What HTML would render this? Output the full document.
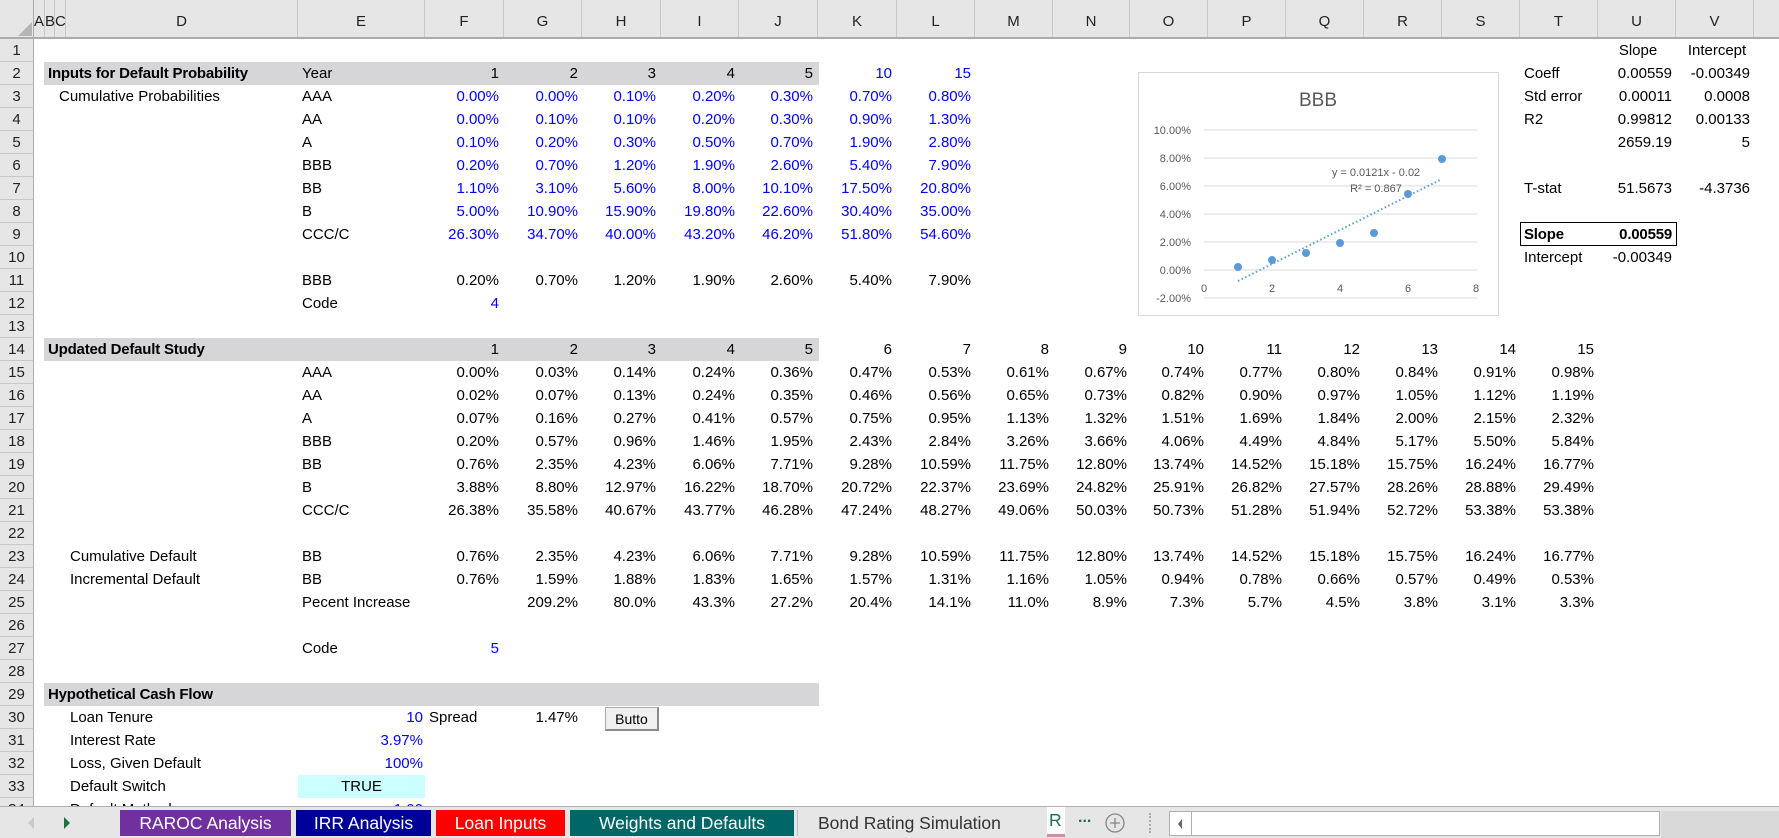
<!DOCTYPE html>
<html><head><meta charset="utf-8"><style>
*{margin:0;padding:0;box-sizing:border-box}
body{width:1779px;height:838px;overflow:hidden;background:#fff;font-family:"Liberation Sans",Arial,sans-serif;font-size:15px;color:#000;position:relative}
.hdr{position:absolute;top:0;left:0;width:1779px;height:39px;background:#e6e6e6;border-bottom:2px solid #ababab}
.ch{position:absolute;top:0;height:37px;line-height:44px;text-align:center;color:#222;font-size:15px;border-right:1px solid #c8c8c8}
.rh{position:absolute;left:0;width:34px;height:23px;line-height:23px;background:#e6e6e6;border-bottom:1px solid #c8c8c8;border-right:1px solid #ababab;text-align:center;color:#222;font-size:15px}
.r{position:absolute;left:0;width:1779px;height:23px;line-height:23px;white-space:nowrap}
.c{position:absolute;top:0;width:79px;text-align:right;padding-right:5px}
.l{position:absolute;top:0}
.b{color:#0000ff}
.band{position:absolute;left:44px;width:775px;height:23px;background:#d6d6d8}
.F{left:425px}.G{left:504px}.H{left:582px}.I{left:661px}.J{left:739px}.K{left:818px}.L{left:897px}.M{left:975px}.N{left:1053px}.O{left:1130px}.P{left:1208px}.Q{left:1286px}.R{left:1364px}.S{left:1442px}.T{left:1520px}.U{left:1598px}.V{left:1676px}
.bold{font-weight:bold;letter-spacing:-0.2px}
.tabbar{position:absolute;left:0;top:806px;width:1779px;height:32px;background:#e6e6e6;border-top:1px solid #b0b0b0}
.tab{position:absolute;top:3px;height:26px;line-height:26px;color:#fff;font-size:17.5px;text-align:center}
</style></head><body>

<div class="hdr">
<svg style="position:absolute;left:18px;top:22px" width="14" height="14"><polygon points="14,0 14,14 0,14" fill="#b5b5b5"/></svg>
<div class="ch" style="left:0;width:34px;border-right:1px solid #ababab"></div>
<div class="ch" style="left:34px;width:11px">A</div>
<div class="ch" style="left:45px;width:10px">B</div>
<div class="ch" style="left:55px;width:11px">C</div>
<div class="ch" style="left:66px;width:232px">D</div>
<div class="ch" style="left:298px;width:127px">E</div>
<div class="ch" style="left:425px;width:79px">F</div>
<div class="ch" style="left:504px;width:78px">G</div>
<div class="ch" style="left:582px;width:79px">H</div>
<div class="ch" style="left:661px;width:78px">I</div>
<div class="ch" style="left:739px;width:79px">J</div>
<div class="ch" style="left:818px;width:79px">K</div>
<div class="ch" style="left:897px;width:78px">L</div>
<div class="ch" style="left:975px;width:78px">M</div>
<div class="ch" style="left:1053px;width:77px">N</div>
<div class="ch" style="left:1130px;width:78px">O</div>
<div class="ch" style="left:1208px;width:78px">P</div>
<div class="ch" style="left:1286px;width:78px">Q</div>
<div class="ch" style="left:1364px;width:78px">R</div>
<div class="ch" style="left:1442px;width:78px">S</div>
<div class="ch" style="left:1520px;width:78px">T</div>
<div class="ch" style="left:1598px;width:78px">U</div>
<div class="ch" style="left:1676px;width:78px">V</div>
</div>

<div class="rh" style="top:39px">1</div><div class="rh" style="top:62px">2</div><div class="rh" style="top:85px">3</div><div class="rh" style="top:108px">4</div><div class="rh" style="top:131px">5</div><div class="rh" style="top:154px">6</div><div class="rh" style="top:177px">7</div><div class="rh" style="top:200px">8</div><div class="rh" style="top:223px">9</div><div class="rh" style="top:246px">10</div><div class="rh" style="top:269px">11</div><div class="rh" style="top:292px">12</div><div class="rh" style="top:315px">13</div><div class="rh" style="top:338px">14</div><div class="rh" style="top:361px">15</div><div class="rh" style="top:384px">16</div><div class="rh" style="top:407px">17</div><div class="rh" style="top:430px">18</div><div class="rh" style="top:453px">19</div><div class="rh" style="top:476px">20</div><div class="rh" style="top:499px">21</div><div class="rh" style="top:522px">22</div><div class="rh" style="top:545px">23</div><div class="rh" style="top:568px">24</div><div class="rh" style="top:591px">25</div><div class="rh" style="top:614px">26</div><div class="rh" style="top:637px">27</div><div class="rh" style="top:660px">28</div><div class="rh" style="top:683px">29</div><div class="rh" style="top:706px">30</div><div class="rh" style="top:729px">31</div><div class="rh" style="top:752px">32</div><div class="rh" style="top:775px">33</div><div class="rh" style="top:798px">34</div>

<div class="band" style="top:62px"></div>
<div class="band" style="top:338px"></div>
<div class="band" style="top:683px"></div>

<div class="r" style="top:39px"><span class="l" style="left:1602px;width:72px;text-align:center">Slope</span><span class="l" style="left:1678px;width:78px;text-align:center">Intercept</span></div>
<div class="r" style="top:62px"><span class="l bold" style="left:48px">Inputs for Default Probability</span><span class="l" style="left:302px">Year</span><span class="c F">1</span><span class="c G">2</span><span class="c H">3</span><span class="c I">4</span><span class="c J">5</span><span class="c K b">10</span><span class="c L b">15</span><span class="l" style="left:1524px">Coeff</span><span class="c U">0.00559</span><span class="c V">-0.00349</span></div>
<div class="r" style="top:85px"><span class="l" style="left:59px">Cumulative Probabilities</span><span class="l" style="left:302px">AAA</span><span class="c F b">0.00%</span><span class="c G b">0.00%</span><span class="c H b">0.10%</span><span class="c I b">0.20%</span><span class="c J b">0.30%</span><span class="c K b">0.70%</span><span class="c L b">0.80%</span><span class="l" style="left:1524px">Std error</span><span class="c U">0.00011</span><span class="c V">0.0008</span></div>
<div class="r" style="top:108px"><span class="l" style="left:302px">AA</span><span class="c F b">0.00%</span><span class="c G b">0.10%</span><span class="c H b">0.10%</span><span class="c I b">0.20%</span><span class="c J b">0.30%</span><span class="c K b">0.90%</span><span class="c L b">1.30%</span><span class="l" style="left:1524px">R2</span><span class="c U">0.99812</span><span class="c V">0.00133</span></div>
<div class="r" style="top:131px"><span class="l" style="left:302px">A</span><span class="c F b">0.10%</span><span class="c G b">0.20%</span><span class="c H b">0.30%</span><span class="c I b">0.50%</span><span class="c J b">0.70%</span><span class="c K b">1.90%</span><span class="c L b">2.80%</span><span class="c U">2659.19</span><span class="c V">5</span></div>
<div class="r" style="top:154px"><span class="l" style="left:302px">BBB</span><span class="c F b">0.20%</span><span class="c G b">0.70%</span><span class="c H b">1.20%</span><span class="c I b">1.90%</span><span class="c J b">2.60%</span><span class="c K b">5.40%</span><span class="c L b">7.90%</span></div>
<div class="r" style="top:177px"><span class="l" style="left:302px">BB</span><span class="c F b">1.10%</span><span class="c G b">3.10%</span><span class="c H b">5.60%</span><span class="c I b">8.00%</span><span class="c J b">10.10%</span><span class="c K b">17.50%</span><span class="c L b">20.80%</span><span class="l" style="left:1524px">T-stat</span><span class="c U">51.5673</span><span class="c V">-4.3736</span></div>
<div class="r" style="top:200px"><span class="l" style="left:302px">B</span><span class="c F b">5.00%</span><span class="c G b">10.90%</span><span class="c H b">15.90%</span><span class="c I b">19.80%</span><span class="c J b">22.60%</span><span class="c K b">30.40%</span><span class="c L b">35.00%</span></div>
<div class="r" style="top:223px"><span class="l" style="left:302px">CCC/C</span><span class="c F b">26.30%</span><span class="c G b">34.70%</span><span class="c H b">40.00%</span><span class="c I b">43.20%</span><span class="c J b">46.20%</span><span class="c K b">51.80%</span><span class="c L b">54.60%</span><span class="l" style="left:1520px;width:157px;height:24px;top:-1px;border:1.5px solid #000"></span><span class="l bold" style="left:1524px">Slope</span><span class="c U bold">0.00559</span></div>
<div class="r" style="top:246px"><span class="l" style="left:1524px">Intercept</span><span class="c U">-0.00349</span></div>
<div class="r" style="top:269px"><span class="l" style="left:302px">BBB</span><span class="c F">0.20%</span><span class="c G">0.70%</span><span class="c H">1.20%</span><span class="c I">1.90%</span><span class="c J">2.60%</span><span class="c K">5.40%</span><span class="c L">7.90%</span></div>
<div class="r" style="top:292px"><span class="l" style="left:302px">Code</span><span class="c F b">4</span></div>

<div class="r" style="top:338px"><span class="l bold" style="left:48px">Updated Default Study</span><span class="c F">1</span><span class="c G">2</span><span class="c H">3</span><span class="c I">4</span><span class="c J">5</span><span class="c K">6</span><span class="c L">7</span><span class="c M">8</span><span class="c N">9</span><span class="c O">10</span><span class="c P">11</span><span class="c Q">12</span><span class="c R">13</span><span class="c S">14</span><span class="c T">15</span></div>
<div class="r" style="top:361px"><span class="l" style="left:302px">AAA</span><span class="c F">0.00%</span><span class="c G">0.03%</span><span class="c H">0.14%</span><span class="c I">0.24%</span><span class="c J">0.36%</span><span class="c K">0.47%</span><span class="c L">0.53%</span><span class="c M">0.61%</span><span class="c N">0.67%</span><span class="c O">0.74%</span><span class="c P">0.77%</span><span class="c Q">0.80%</span><span class="c R">0.84%</span><span class="c S">0.91%</span><span class="c T">0.98%</span></div>
<div class="r" style="top:384px"><span class="l" style="left:302px">AA</span><span class="c F">0.02%</span><span class="c G">0.07%</span><span class="c H">0.13%</span><span class="c I">0.24%</span><span class="c J">0.35%</span><span class="c K">0.46%</span><span class="c L">0.56%</span><span class="c M">0.65%</span><span class="c N">0.73%</span><span class="c O">0.82%</span><span class="c P">0.90%</span><span class="c Q">0.97%</span><span class="c R">1.05%</span><span class="c S">1.12%</span><span class="c T">1.19%</span></div>
<div class="r" style="top:407px"><span class="l" style="left:302px">A</span><span class="c F">0.07%</span><span class="c G">0.16%</span><span class="c H">0.27%</span><span class="c I">0.41%</span><span class="c J">0.57%</span><span class="c K">0.75%</span><span class="c L">0.95%</span><span class="c M">1.13%</span><span class="c N">1.32%</span><span class="c O">1.51%</span><span class="c P">1.69%</span><span class="c Q">1.84%</span><span class="c R">2.00%</span><span class="c S">2.15%</span><span class="c T">2.32%</span></div>
<div class="r" style="top:430px"><span class="l" style="left:302px">BBB</span><span class="c F">0.20%</span><span class="c G">0.57%</span><span class="c H">0.96%</span><span class="c I">1.46%</span><span class="c J">1.95%</span><span class="c K">2.43%</span><span class="c L">2.84%</span><span class="c M">3.26%</span><span class="c N">3.66%</span><span class="c O">4.06%</span><span class="c P">4.49%</span><span class="c Q">4.84%</span><span class="c R">5.17%</span><span class="c S">5.50%</span><span class="c T">5.84%</span></div>
<div class="r" style="top:453px"><span class="l" style="left:302px">BB</span><span class="c F">0.76%</span><span class="c G">2.35%</span><span class="c H">4.23%</span><span class="c I">6.06%</span><span class="c J">7.71%</span><span class="c K">9.28%</span><span class="c L">10.59%</span><span class="c M">11.75%</span><span class="c N">12.80%</span><span class="c O">13.74%</span><span class="c P">14.52%</span><span class="c Q">15.18%</span><span class="c R">15.75%</span><span class="c S">16.24%</span><span class="c T">16.77%</span></div>
<div class="r" style="top:476px"><span class="l" style="left:302px">B</span><span class="c F">3.88%</span><span class="c G">8.80%</span><span class="c H">12.97%</span><span class="c I">16.22%</span><span class="c J">18.70%</span><span class="c K">20.72%</span><span class="c L">22.37%</span><span class="c M">23.69%</span><span class="c N">24.82%</span><span class="c O">25.91%</span><span class="c P">26.82%</span><span class="c Q">27.57%</span><span class="c R">28.26%</span><span class="c S">28.88%</span><span class="c T">29.49%</span></div>
<div class="r" style="top:499px"><span class="l" style="left:302px">CCC/C</span><span class="c F">26.38%</span><span class="c G">35.58%</span><span class="c H">40.67%</span><span class="c I">43.77%</span><span class="c J">46.28%</span><span class="c K">47.24%</span><span class="c L">48.27%</span><span class="c M">49.06%</span><span class="c N">50.03%</span><span class="c O">50.73%</span><span class="c P">51.28%</span><span class="c Q">51.94%</span><span class="c R">52.72%</span><span class="c S">53.38%</span><span class="c T">53.38%</span></div>
<div class="r" style="top:545px"><span class="l" style="left:70px">Cumulative Default</span><span class="l" style="left:302px">BB</span><span class="c F">0.76%</span><span class="c G">2.35%</span><span class="c H">4.23%</span><span class="c I">6.06%</span><span class="c J">7.71%</span><span class="c K">9.28%</span><span class="c L">10.59%</span><span class="c M">11.75%</span><span class="c N">12.80%</span><span class="c O">13.74%</span><span class="c P">14.52%</span><span class="c Q">15.18%</span><span class="c R">15.75%</span><span class="c S">16.24%</span><span class="c T">16.77%</span></div>
<div class="r" style="top:568px"><span class="l" style="left:70px">Incremental Default</span><span class="l" style="left:302px">BB</span><span class="c F">0.76%</span><span class="c G">1.59%</span><span class="c H">1.88%</span><span class="c I">1.83%</span><span class="c J">1.65%</span><span class="c K">1.57%</span><span class="c L">1.31%</span><span class="c M">1.16%</span><span class="c N">1.05%</span><span class="c O">0.94%</span><span class="c P">0.78%</span><span class="c Q">0.66%</span><span class="c R">0.57%</span><span class="c S">0.49%</span><span class="c T">0.53%</span></div>
<div class="r" style="top:591px"><span class="l" style="left:302px">Pecent Increase</span><span class="c G">209.2%</span><span class="c H">80.0%</span><span class="c I">43.3%</span><span class="c J">27.2%</span><span class="c K">20.4%</span><span class="c L">14.1%</span><span class="c M">11.0%</span><span class="c N">8.9%</span><span class="c O">7.3%</span><span class="c P">5.7%</span><span class="c Q">4.5%</span><span class="c R">3.8%</span><span class="c S">3.1%</span><span class="c T">3.3%</span></div>
<div class="r" style="top:637px"><span class="l" style="left:302px">Code</span><span class="c F b">5</span></div>

<div class="r" style="top:683px"><span class="l bold" style="left:48px">Hypothetical Cash Flow</span></div>
<div class="r" style="top:706px"><span class="l" style="left:70px">Loan Tenure</span><span class="l b" style="left:298px;width:125px;text-align:right">10</span><span class="l" style="left:429px">Spread</span><span class="c G">1.47%</span>
<span class="l" style="left:605px;top:1px;width:54px;height:24px;line-height:22px;background:#f0f0f0;border:1px solid #adadad;border-bottom:2px solid #8a8a8a;border-right:2px solid #8a8a8a;text-align:center;font-size:14px">Butto</span></div>
<div class="r" style="top:729px"><span class="l" style="left:70px">Interest Rate</span><span class="l b" style="left:298px;width:125px;text-align:right">3.97%</span></div>
<div class="r" style="top:752px"><span class="l" style="left:70px">Loss, Given Default</span><span class="l b" style="left:298px;width:125px;text-align:right">100%</span></div>
<div class="r" style="top:775px"><span class="l" style="left:70px">Default Switch</span><span class="l" style="left:298px;width:127px;height:23px;background:#ccffff;text-align:center">TRUE</span></div>
<div class="r" style="top:798px"><span class="l" style="left:70px">Default Method</span><span class="l b" style="left:298px;width:125px;text-align:right">1.00</span></div>

<svg style="position:absolute;left:1138px;top:72px" width="362" height="245" font-family="Liberation Sans, Arial, sans-serif">
<rect x="0.5" y="0.5" width="360" height="243" fill="#fff" stroke="#d9d9d9"/>
<text x="180" y="34" font-size="19" fill="#595959" text-anchor="middle">BBB</text>
<g stroke="#d9d9d9" stroke-width="1">
<line x1="66" x2="339" y1="58" y2="58"/><line x1="66" x2="339" y1="86" y2="86"/><line x1="66" x2="339" y1="114" y2="114"/><line x1="66" x2="339" y1="142" y2="142"/><line x1="66" x2="339" y1="170" y2="170"/><line x1="66" x2="339" y1="198" y2="198"/><line x1="66" x2="339" y1="226" y2="226"/>
</g>
<g font-size="11" fill="#595959" text-anchor="end">
<text x="53" y="62">10.00%</text><text x="53" y="90">8.00%</text><text x="53" y="118">6.00%</text><text x="53" y="146">4.00%</text><text x="53" y="174">2.00%</text><text x="53" y="202">0.00%</text><text x="53" y="230">-2.00%</text>
</g>
<g font-size="11" fill="#595959" text-anchor="middle">
<text x="66" y="220">0</text><text x="134" y="220">2</text><text x="202" y="220">4</text><text x="270" y="220">6</text><text x="338" y="220">8</text>
</g>
<line x1="100" y1="209" x2="304" y2="107" stroke="#5b9bd5" stroke-width="2" stroke-dasharray="1.5,2.5"/>
<g fill="#5b9bd5">
<circle cx="100" cy="195" r="4"/><circle cx="134" cy="188" r="4"/><circle cx="168" cy="181" r="4"/><circle cx="202" cy="171" r="4"/><circle cx="236" cy="161" r="4"/><circle cx="270" cy="122" r="4"/><circle cx="304" cy="87" r="4"/>
</g>
<text x="238" y="104" font-size="11" fill="#595959" text-anchor="middle">y = 0.0121x - 0.02</text>
<text x="238" y="120" font-size="11" fill="#595959" text-anchor="middle">R² = 0.867</text>
</svg>

<div class="tabbar">
<svg style="position:absolute;left:26px;top:9px" width="10" height="14"><polygon points="8,1 8,13 2,7" fill="#c8c8c8"/></svg>
<svg style="position:absolute;left:62px;top:9px" width="10" height="14"><polygon points="2,1 2,13 8,7" fill="#1e7145"/></svg>
<div class="tab" style="left:120px;width:171px;background:#7030a0">RAROC Analysis</div>
<div class="tab" style="left:296px;width:135px;background:#000099">IRR Analysis</div>
<div class="tab" style="left:436px;width:129px;background:#ff0000">Loan Inputs</div>
<div class="tab" style="left:570px;width:224px;background:#006666">Weights and Defaults</div>
<div class="tab" style="left:797px;width:248px;color:#333;border-left:1px solid #c0c0c0;text-align:left;padding-left:20px">Bond Rating Simulation</div>
<div class="tab" style="left:1047px;width:18px;top:0;height:30px;background:#fff;color:#1e7145;border-bottom:3px solid #d88ca8;text-align:left;padding-left:2px">R</div>
<div style="position:absolute;left:1078px;top:2px;color:#1e7145;font-weight:bold;font-size:16px">...</div>
<svg style="position:absolute;left:1104px;top:5px" width="22" height="22"><circle cx="11" cy="11" r="9" fill="none" stroke="#888" stroke-width="1.3"/><path d="M11 6v10M6 11h10" stroke="#888" stroke-width="1.3"/></svg>
<div style="position:absolute;left:1149px;top:6px;width:2px;height:20px;border-left:2px dotted #aaa"></div>
<div style="position:absolute;left:1169px;top:4px;width:491px;height:25px;background:#fff;border:1px solid #b0b0b0"></div>
<div style="position:absolute;left:1169px;top:4px;width:23px;height:25px;border-right:1px solid #b0b0b0"></div>
<svg style="position:absolute;left:1175px;top:10px" width="10" height="14"><polygon points="7,2 7,12 3,7" fill="#666"/></svg>
<div style="position:absolute;left:1661px;top:4px;width:118px;height:27px;background:#d9d9d9"></div>
</div>
</body></html>
